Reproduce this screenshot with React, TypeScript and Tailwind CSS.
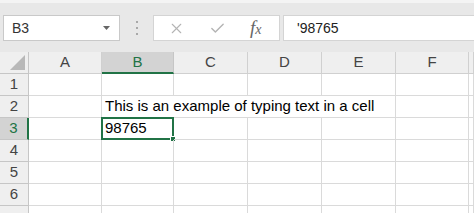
import { Check, X } from 'lucide-react';

const cols = ['A', 'B', 'C', 'D', 'E', 'F', ''];
const widths = ['w-[73px]', 'w-[72px]', 'w-[74px]', 'w-[74px]', 'w-[74px]', 'w-[73px]', 'flex-1'];
const rows = [1, 2, 3, 4, 5, 6, 7];

export default function App() {
  return (
    <div className="h-[213px] w-[474px] overflow-hidden bg-white font-['Liberation_Sans',Arial,sans-serif]">
      {/* formula bar */}
      <div className="h-[52px] border-t-[3px] border-[#f4f4f4] bg-[#e8e8e8]">
        <div className="mt-[12px] flex h-[26px] items-stretch pl-[3px]">
          <div className="flex w-[117px] items-center justify-between border border-[#c9c9c9] bg-white pl-[8px] pr-[9px] text-[14px] text-[#333]">
            <span>B3</span>
            <svg width="7" height="4" viewBox="0 0 7 4">
              <path d="M0 0h7L3.5 4z" fill="#666" />
            </svg>
          </div>
          <div className="flex w-[33px] flex-col items-center justify-center gap-[4px]">
            <span className="h-[2px] w-[2px] bg-[#a8a8a8]" />
            <span className="h-[2px] w-[2px] bg-[#a8a8a8]" />
            <span className="h-[2px] w-[2px] bg-[#a8a8a8]" />
          </div>
          <div className="flex w-[127px] items-center border border-[#d4d4d4] bg-white">
            <X className="ml-[14px] h-[17px] w-[17px] text-[#b4b4b4]" strokeWidth={1.5} />
            <Check className="ml-[24px] h-[17px] w-[17px] text-[#b4b4b4]" strokeWidth={2} />
            <span className="ml-[24px] font-['Liberation_Serif',serif] text-[19px] italic text-[#666]">
              f<span className="text-[14px]">x</span>
            </span>
          </div>
          <div className="ml-[3px] flex flex-1 items-center border border-r-0 border-[#d4d4d4] bg-white pl-[13px] text-[14px] text-[#222]">
            '98765
          </div>
        </div>
      </div>

      {/* grid */}
      <div className="flex h-[22px] bg-[#efefef]">
        <div className="relative w-[29px] border-b border-r border-[#c6c6c6]">
          <svg className="absolute bottom-[3px] right-[3px]" width="15" height="15" viewBox="0 0 15 15">
            <path d="M15 0V15H0z" fill="#b8b8b8" />
          </svg>
        </div>
        {cols.map((c, i) => (
          <div
            key={i}
            className={`flex items-center justify-center border-r text-[15px] ${widths[i]} ${
              c === 'B'
                ? 'border-b-2 border-r-[#c6c6c6] border-b-[#217346] bg-[#d3d3d3] text-[#217346]'
                : 'border-b border-[#d0d0d0] text-[#444]'
            }`}
          >
            {c}
          </div>
        ))}
      </div>
      {rows.map((r) => (
        <div key={r} className="flex h-[22px]">
          <div
            className={`flex w-[29px] items-center justify-center border-b text-[15px] ${
              r === 3
                ? 'border-r-2 border-b-[#c6c6c6] border-r-[#217346] bg-[#d3d3d3] text-[#217346]'
                : 'border-r border-[#c6c6c6] bg-[#efefef] text-[#444]'
            }`}
          >
            {r < 7 ? r : ''}
          </div>
          {cols.map((c, i) => {
            const hideRight = r === 2 && i >= 1 && i <= 3;
            return (
              <div
                key={i}
                className={`relative border-b border-[#dadada] ${hideRight ? 'border-r-0' : 'border-r'} ${widths[i]}`}
              >
                {r === 2 && c === 'B' && (
                  <span className="absolute bottom-0 left-[3px] z-10 whitespace-nowrap text-[15px] text-black">
                    This is an example of typing text in a cell
                  </span>
                )}
                {r === 3 && c === 'B' && (
                  <>
                    <span className="absolute bottom-0 left-[3px] text-[15px] text-black">98765</span>
                    <div className="absolute -left-[1px] -top-[1px] h-[23px] w-[73px] border-2 border-[#217346]" />
                    <div className="absolute -bottom-[3px] -right-[3px] h-[6px] w-[6px] border border-white bg-[#217346]" />
                  </>
                )}
              </div>
            );
          })}
        </div>
      ))}
    </div>
  );
}
